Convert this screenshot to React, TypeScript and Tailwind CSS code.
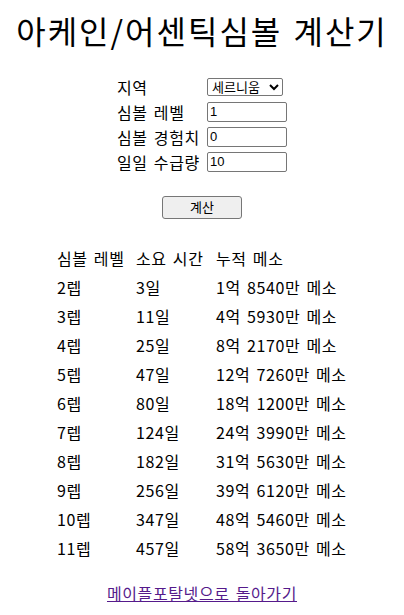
import { useState } from "react";

type Row = { level: string; days: string; meso: string };

const rows: Row[] = [
  { level: "2렙", days: "3일", meso: "1억 8540만 메소" },
  { level: "3렙", days: "11일", meso: "4억 5930만 메소" },
  { level: "4렙", days: "25일", meso: "8억 2170만 메소" },
  { level: "5렙", days: "47일", meso: "12억 7260만 메소" },
  { level: "6렙", days: "80일", meso: "18억 1200만 메소" },
  { level: "7렙", days: "124일", meso: "24억 3990만 메소" },
  { level: "8렙", days: "182일", meso: "31억 5630만 메소" },
  { level: "9렙", days: "256일", meso: "39억 6120만 메소" },
  { level: "10렙", days: "347일", meso: "48억 5460만 메소" },
  { level: "11렙", days: "457일", meso: "58억 3650만 메소" },
];

const font = "[font-family:'Noto_Sans_CJK_KR','Noto_Sans',sans-serif]";
const ctrlFont = "[font-family:'Liberation_Sans','Noto_Sans_CJK_KR',sans-serif]";

export default function App() {
  const [region, setRegion] = useState("세르니움");
  const [level, setLevel] = useState("1");
  const [exp, setExp] = useState("0");
  const [daily, setDaily] = useState("10");

  const inputCls = `h-[20px] w-[80px] rounded-[2px] border border-[#767676] bg-white px-[2px] text-[13px] text-black tracking-normal ${ctrlFont}`;

  return (
    <div className={`min-h-[615px] w-[404px] bg-white text-[16px] text-black tracking-[0.6px] [word-spacing:2px] ${font}`}>
      <h1 className="pt-[9px] text-center text-[32px] leading-[42px] tracking-[2px]">아케인/어센틱심볼 계산기</h1>

      <div className="mx-auto mt-[23px] grid w-[170px] grid-cols-[90px_80px] auto-rows-[25px] items-center">
        <span className="whitespace-nowrap">지역</span>
        <select
          value={region}
          onChange={(e) => setRegion(e.target.value)}
          className={`h-[18px] w-[76px] rounded-[2px] border border-[#767676] bg-white text-[13px] leading-none tracking-normal ${ctrlFont}`}
        >
          <option>세르니움</option>
          <option>아르크스</option>
          <option>오디움</option>
        </select>
        <span className="whitespace-nowrap">심볼 레벨</span>
        <input className={inputCls} value={level} onChange={(e) => setLevel(e.target.value)} />
        <span className="whitespace-nowrap">심볼 경험치</span>
        <input className={inputCls} value={exp} onChange={(e) => setExp(e.target.value)} />
        <span className="whitespace-nowrap">일일 수급량</span>
        <input className={inputCls} value={daily} onChange={(e) => setDaily(e.target.value)} />
      </div>

      <div className="mt-[22px] flex justify-center">
        <button
          type="button"
          className={`h-[23px] w-[80px] rounded-[3px] border border-[#767676] bg-[#efefef] text-[13px] text-black tracking-normal ${ctrlFont}`}
        >
          계산
        </button>
      </div>

      <div className="mx-auto mt-[24px] grid w-[290px] grid-cols-[79px_80px_131px] auto-rows-[29px] items-center">
        <span className="whitespace-nowrap">심볼 레벨</span>
        <span className="whitespace-nowrap">소요 시간</span>
        <span className="whitespace-nowrap">누적 메소</span>
        {rows.map((r) => (
          <div key={r.level} className="contents">
            <span>{r.level}</span>
            <span>{r.days}</span>
            <span className="whitespace-nowrap">{r.meso}</span>
          </div>
        ))}
      </div>

      <p className="mt-[19px] text-center">
        <a href="#" className="text-[#551a8b] underline">
          메이플포탈넷으로 돌아가기
        </a>
      </p>
    </div>
  );
}
